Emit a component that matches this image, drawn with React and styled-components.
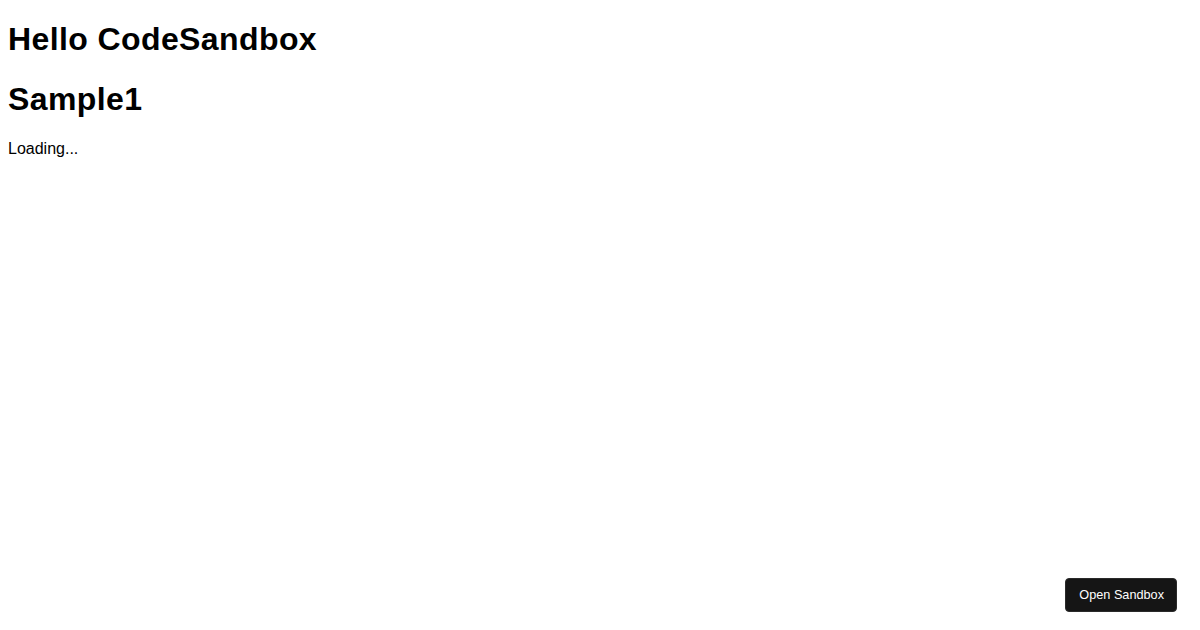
import React from "react";
import styled, { createGlobalStyle } from "styled-components";

const Global = createGlobalStyle`
  body {
    margin: 0;
    font-family: "Liberation Sans", Arial, sans-serif;
    background: #fff;
    color: #000;
  }
`;

const Page = styled.main`
  padding: 21px 8px 8px;
  display: flow-root;
`;

const Title = styled.h1`
  font-size: 32px;
  letter-spacing: 0.4px;
  font-weight: bold;
  margin: ${(p) => (p.$first ? "0" : "22.5px")} 0 22.5px;
`;

const Status = styled.p`
  font-size: 16px;
  margin: 16px 0;
`;

const OpenButton = styled.a`
  position: fixed;
  right: 23px;
  bottom: 18px;
  height: 34px;
  padding: 0 12px 0 13px;
  box-sizing: border-box;
  display: flex;
  align-items: center;
  background: #151515;
  color: #fff;
  font-size: 12.7px;
  border-radius: 4px;
  border: 1px solid #2a2a2a;
  text-decoration: none;
`;

export default function App() {
  return (
    <>
      <Global />
      <Page>
        <Title $first>Hello CodeSandbox</Title>
        <Title>Sample1</Title>
        <Status>Loading...</Status>
      </Page>
      <OpenButton href="#">Open Sandbox</OpenButton>
    </>
  );
}
